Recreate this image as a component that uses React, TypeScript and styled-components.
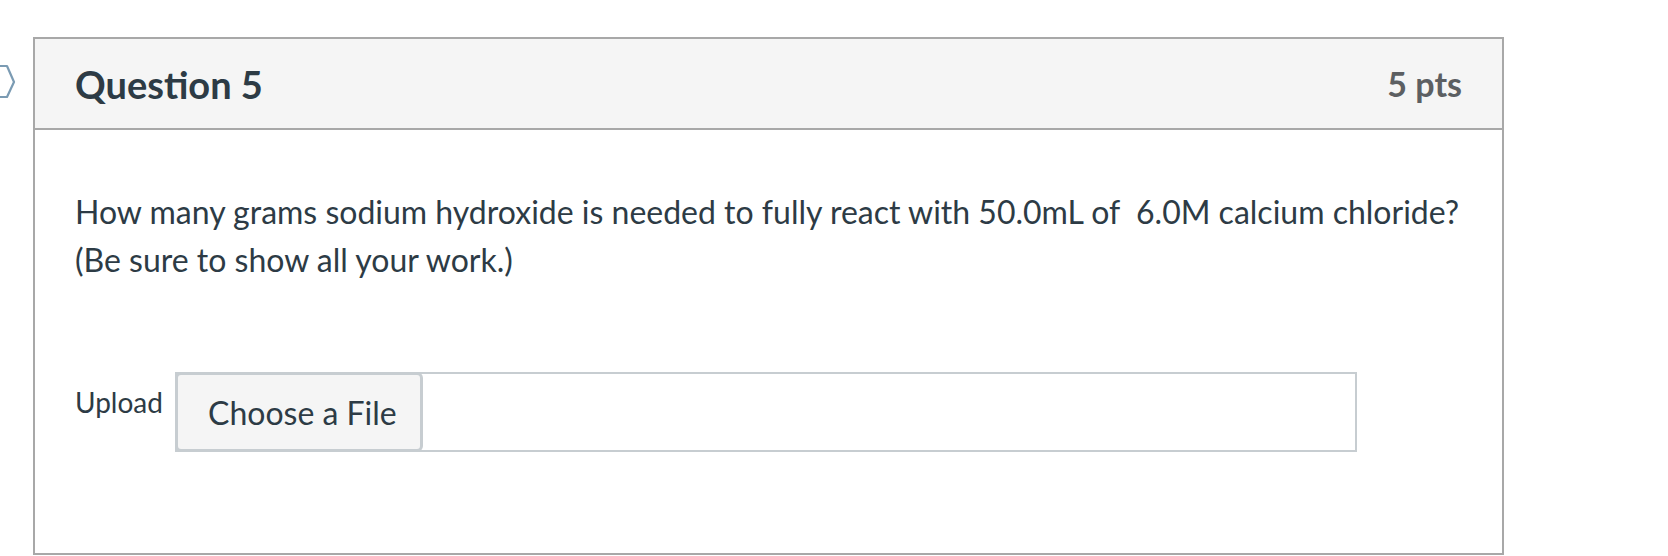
import React from "react";
import styled, { createGlobalStyle } from "styled-components";

const GlobalStyle = createGlobalStyle`
  html, body {
    margin: 0;
    padding: 0;
    background: #ffffff;
    font-family: Lato, "Noto Sans", "Liberation Sans", sans-serif;
    color: #2d3b45;
  }
`;

const Page = styled.div`
  display: flex;
  align-items: flex-start;
  padding-top: 37px;
`;

const FlagCol = styled.div`
  width: 33px;
  flex-shrink: 0;
  padding-top: 16px;
`;

const Panel = styled.section`
  width: 1467px;
  border: 2px solid #a8a8a8;
  background: #fff;
`;

const Header = styled.header`
  display: flex;
  align-items: center;
  justify-content: space-between;
  height: 89px;
  padding: 0 40px 0 40px;
  background: #f5f5f5;
  border-bottom: 2px solid #a8a8a8;
`;

const Title = styled.h2`
  margin: 0;
  font-size: 38px;
  font-weight: 700;
  color: #2d3b45;
`;

const Points = styled.div`
  font-size: 34px;
  font-weight: 700;
  color: #5c5f62;
`;

const Body = styled.div`
  padding: 58px 40px 101px 40px;
`;

const QuestionText = styled.p`
  margin: 0;
  font-size: 32px;
  line-height: 48px;
  white-space: pre-wrap;
`;

const UploadRow = styled.div`
  display: flex;
  align-items: flex-start;
  gap: 15px;
  margin-top: 88px;
`;

const UploadLabel = styled.label`
  font-size: 28px;
  line-height: 1.2;
  margin-top: 14px;
  width: 85px;
`;

const FileBox = styled.div`
  display: flex;
  width: 1182px;
  height: 80px;
  box-sizing: border-box;
  border: 2px solid #c7cdd1;
`;

const ChooseButton = styled.button`
  width: 248px;
  margin: -2px 0 -2px -2px;
  padding: 0 0 0 30px;
  text-align: left;
  background: #f5f5f5;
  border: 3px solid #c7cdd1;
  border-radius: 6px;
  font-family: inherit;
  font-size: 32px;
  color: #2d3b45;
  cursor: pointer;
`;

const Flag = () => (
  <svg width="18" height="48" viewBox="0 0 18 48">
    <polyline
      points="0,13 7,13 14,29 7,44 0,44"
      fill="none"
      stroke="#7b9bb3"
      strokeWidth="2.2"
      strokeLinejoin="round"
    />
  </svg>
);

export default function App() {
  return (
    <>
      <GlobalStyle />
      <Page>
        <FlagCol>
          <Flag />
        </FlagCol>
        <Panel>
          <Header>
            <Title>Question 5</Title>
            <Points>5 pts</Points>
          </Header>
          <Body>
            <QuestionText>
              {"How many grams sodium hydroxide is needed to fully react with 50.0mL of  6.0M calcium chloride?\n(Be sure to show all your work.)"}
            </QuestionText>
            <UploadRow>
              <UploadLabel>Upload</UploadLabel>
              <FileBox>
                <ChooseButton type="button">Choose a File</ChooseButton>
              </FileBox>
            </UploadRow>
          </Body>
        </Panel>
      </Page>
    </>
  );
}
